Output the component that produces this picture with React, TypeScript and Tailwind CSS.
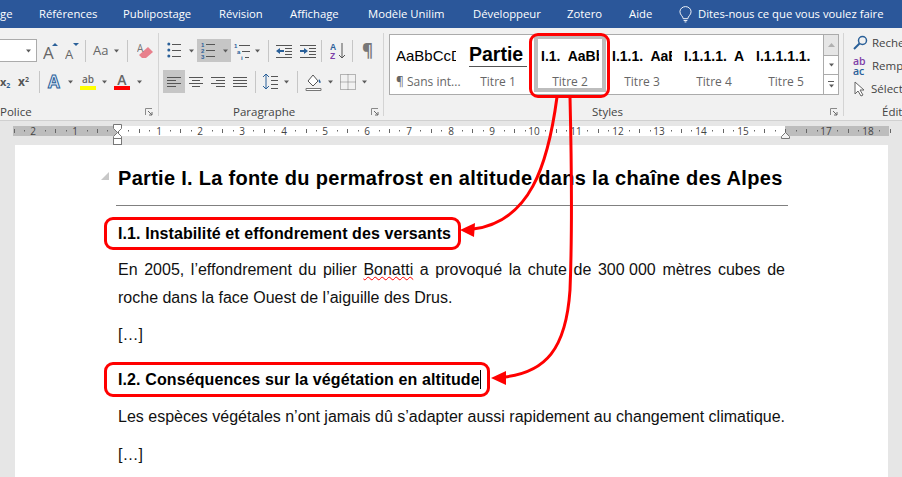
import React from "react";

const tabs: [string, string][] = [
  ["ge", "w-[39px]"],
  ["Références", "w-[84px]"],
  ["Publipostage", "w-[96px]"],
  ["Révision", "w-[71px]"],
  ["Affichage", "w-[78px]"],
  ["Modèle Unilim", "w-[105px]"],
  ["Développeur", "w-[94px]"],
  ["Zotero", "w-[62px]"],
  ["Aide", "w-[51px]"],
];

const Caret = ({ className = "" }: { className?: string }) => (
  <svg width="7" height="4" viewBox="0 0 7 4" className={`shrink-0 ${className}`}>
    <path d="M1 .5h5L3.500 3.500z" fill="#5c5c5c" />
  </svg>
);
const Sep = ({ className = "" }: { className?: string }) => <div className={`w-px h-[22px] shrink-0 bg-[#c6c6c6] ${className}`} />;

const Launcher = () => (
  <svg width="8" height="8" viewBox="0 0 8 8">
    <path d="M.5 7V.5H7" fill="none" stroke="#8a8a8a" />
    <path d="M3 3l4 4M4 7h3V4" fill="none" stroke="#6a6a6a" />
  </svg>
);

const Align = ({ w, rows, className = "" }: { w: number; rows: [number, number][]; className?: string }) => (
  <svg width={w} height="12" viewBox={`0 0 ${w} 12`} className={`shrink-0 ${className}`}>
    {rows.map(([a, b], i) => (
      <path key={i} d={`M${a} ${i * 3 + 1.5}H${b}`} stroke="#555" />
    ))}
  </svg>
);

const ListIcon = ({ kind }: { kind: "bullet" | "num" }) => (
  <svg width="14" height="17" viewBox="0 0 14 17" className="shrink-0">
    {[2, 8, 14].map((y, i) =>
      kind === "bullet" ? (
        <circle key={y} cx="1.800" cy={y} r="1.500" fill="#2a6099" />
      ) : (
        <text key={y} x="0" y={y + 2.5} fontSize="6" fontWeight="700" fill="#2a6099" fontFamily="Liberation Sans, sans-serif">
          {i + 1}
        </text>
      )
    )}
    <path d="M5 2.500h9M5 8.500h9M5 14.500h9" stroke="#555" />
  </svg>
);

const StyleItem = ({ preview, label, selected, previewClass = "", w = "w-[72px]", extra }: { preview?: string; label: string; selected?: boolean; previewClass?: string; w?: string; extra?: React.ReactNode }) => (
  <div className={`${w} shrink-0 self-start flex flex-col border-[4px] ${selected ? "h-[57px] pl-[3px] border-[#bdbdbd]" : "h-[59px] border-transparent"}`}>
    <div className={`h-[34px] shrink-0 flex items-center whitespace-pre overflow-hidden font-['Liberation_Sans',sans-serif] text-black ${previewClass}`}>
      {extra ?? preview}
    </div>
    <div className={`text-[12px] leading-[17px] text-[#666] whitespace-nowrap ${selected ? "text-center w-[58px]" : "text-center w-[60px]"}`}>{label}</div>
  </div>
);

function Ruler() {
  const labels = [
    [33, "2"], [75, "1"], [159, "1"], [200, "2"], [242, "3"], [284, "4"], [325, "5"], [367, "6"], [409, "7"], [451, "8"], [492, "9"], [534, "10"], [576, "11"], [618, "12"], [659, "13"], [701, "14"], [743, "15"], [826, "17"], [868, "18"],
  ] as [number, string][];
  const ticks: number[] = [];
  for (let x = 13.5; x < 890; x += 10.43) ticks.push(x);
  return (
    <svg width="902" height="24" viewBox="0 0 902 24" className="block">
      <rect x="13" y="5" width="105" height="10" fill="#bdbdbd" />
      <rect x="118" y="5" width="667" height="10" fill="#fff" />
      <rect x="785" y="5" width="104" height="10" fill="#bdbdbd" />
      {ticks.map((x, i) => {
        const near = labels.some(([l]) => Math.abs(l - x) < 4);
        if (near) return null;
        const major = i % 2 === 0;
        return <rect key={i} x={Math.round(x)} y={major ? 8 : 9} width="1" height={major ? 4 : 1.5} fill="#666" />;
      })}
      {labels.map(([x, t]) => (
        <text key={t + x} x={x} y="14" textAnchor="middle" fontSize="10" fill="#444" fontFamily="Open Sans, sans-serif">
          {t}
        </text>
      ))}
      <path d="M113.500 3.500h8v4l-4 4-4-4z" fill="#fff" stroke="#777" />
      <path d="M113.500 15.500l4-4 4 4v2h-8z" fill="#fff" stroke="#777" />
      <rect x="113.500" y="17.500" width="8" height="6" fill="#fff" stroke="#777" />
      <path d="M781.500 15.500l4-4 4 4v2h-8z" fill="#f4f4f4" stroke="#777" />
    </svg>
  );
}

const groupCls = "shrink-0 border-r border-[#d4d4d4] mt-[5px] mb-[4px] flex flex-col";
const labelCls = "mt-auto h-[8px] flex items-center text-[11.500px] whitespace-nowrap";

export default function App() {
  return (
    <div className="relative w-[902px] h-[477px] overflow-hidden bg-[#e6e6e6] font-['Open_Sans',sans-serif]">
      {/* title tabs */}
      <div className="h-[28px] bg-[#2b579a] flex items-center text-white text-[11.300px] whitespace-nowrap">
        {tabs.map(([t, w], i) => (
          <div key={i} className={`${w} shrink-0`}>{t}</div>
        ))}
        <div className="flex items-center gap-[6px] -ml-[1px]">
          <svg width="13" height="17" viewBox="0 0 14 17" fill="none" stroke="#fff">
            <path d="M4.500 13c0-2.500-3.500-4-3.500-7.500a6 5.500 0 0 1 12 0C13 9 9.500 10.500 9.500 13zM5 15h4M6 16.500h2" />
          </svg>
          <span>Dites-nous ce que vous voulez faire</span>
        </div>
      </div>

      {/* ribbon */}
      <div className="h-[93px] bg-[#f1f1f1] border-b border-[#d0d0d0] flex text-[#444] overflow-hidden">
        {/* Police */}
        <div className={`w-[159px] ${groupCls}`}>
          <div className="h-[23px] mt-[6px] flex items-center text-[#555]">
            <div className="w-[37px] h-[23px] shrink-0 bg-white border border-[#ababab] border-l-0 flex items-center justify-end pr-[4px]"><Caret /></div>
            <svg width="16" height="18" viewBox="0 0 16 18" className="ml-[6px] shrink-0">
              <text x="0" y="17" fontSize="17" fill="#666" fontFamily="Open Sans, sans-serif">A</text>
              <path d="M9 4l3-3 3 3z" fill="#2a6099" />
            </svg>
            <svg width="14" height="18" viewBox="0 0 14 18" className="ml-[6px] shrink-0">
              <text x="0" y="17" fontSize="13" fill="#666" fontFamily="Open Sans, sans-serif">A</text>
              <path d="M8 1h6l-3 3z" fill="#2a6099" />
            </svg>
            <Sep className="ml-[6px]" />
            <span className="ml-[7px] w-[16px] text-[13px] leading-none text-[#666]">Aa</span>
            <Caret className="ml-[4px]" />
            <Sep className="ml-[7px]" />
            <svg width="16" height="18" viewBox="0 0 16 18" className="ml-[9px] shrink-0">
              <path d="M5 16l-3-3 9-8 5 5-7 6z" fill="#e8808c" />
              <text x="0" y="10" fontSize="10" fill="#777" fontFamily="Open Sans, sans-serif">A</text>
            </svg>
          </div>
          <div className="h-[23px] mt-[8px] flex items-center text-[#555]">
            <span className="w-[18px] shrink-0 text-[11px] font-bold leading-none">x<sub className="text-[7px] text-[#2a6099]">2</sub></span>
            <span className="w-[21px] shrink-0 text-[12px] font-bold leading-none">x<sup className="text-[7px]">2</sup></span>
            <Sep />
            <span className="ml-[8px] w-[15px] shrink-0 text-[17px] font-bold leading-none text-[#dce8f5] [-webkit-text-stroke:1px_#2a6099]">A</span>
            <Caret className="ml-[4px]" />
            <div className="ml-[6px] w-[16px] shrink-0 flex flex-col items-center">
              <span className="text-[10px] leading-[13px] font-semibold text-[#666]">ab</span>
              <div className="w-[16px] h-[4px] bg-[#ffff00]" />
            </div>
            <Caret className="ml-[5px]" />
            <div className="ml-[6px] w-[16px] shrink-0 flex flex-col items-center">
              <span className="text-[14px] leading-[13px] font-semibold text-[#666]">A</span>
              <div className="w-[16px] h-[4px] bg-[#ff0000]" />
            </div>
            <Caret className="ml-[6px]" />
          </div>
          <div className={`${labelCls} justify-between pr-[5px]`}>
            <span>Police</span><Launcher />
          </div>
        </div>

        {/* Paragraphe */}
        <div className={`w-[225px] ${groupCls}`}>
          <div className="h-[23px] mt-[6px] flex items-center">
            <div className="ml-[8px] flex"><ListIcon kind="bullet" /></div>
            <Caret className="ml-[7px]" />
            <div className="ml-[2px] w-[34px] h-[23px] shrink-0 bg-[#c6c6c6] flex items-center pl-[4px] gap-[7px]"><ListIcon kind="num" /><Caret /></div>
            <svg width="16" height="18" viewBox="0 0 16 18" className="ml-[3px] shrink-0">
              <text x="0" y="6" fontSize="6" fontWeight="700" fill="#2a6099" fontFamily="Liberation Sans, sans-serif">1</text>
              <text x="3" y="12" fontSize="6" fontWeight="700" fill="#2a6099" fontFamily="Liberation Sans, sans-serif">a</text>
              <text x="7" y="18" fontSize="6" fontWeight="700" fill="#2a6099" fontFamily="Liberation Sans, sans-serif">i</text>
              <path d="M5 3.500h11M8 9.500h8M11 15.500h4" stroke="#555" />
            </svg>
            <Caret className="ml-[4px]" />
            <Sep className="ml-[7px]" />
            <svg width="16" height="14" viewBox="0 0 16 14" className="ml-[7px] shrink-0">
              <path d="M0 1.500h16M9 4.500h7M9 7.500h7M9 10.500h7M0 13.500h16" stroke="#555" />
              <path d="M0 7l4-3v2h4v2H4v2z" fill="#2a6099" />
            </svg>
            <svg width="16" height="14" viewBox="0 0 16 14" className="ml-[8px] shrink-0">
              <path d="M0 1.500h16M9 4.500h7M9 7.500h7M9 10.500h7M0 13.500h16" stroke="#555" />
              <path d="M8 7L4 4v2H0v2h4v2z" fill="#2a6099" />
            </svg>
            <Sep className="ml-[5px]" />
            <svg width="16" height="18" viewBox="0 0 16 18" className="ml-[8px] shrink-0">
              <text x="0" y="8" fontSize="8.500" fontWeight="700" fill="#2a6099" fontFamily="Liberation Sans, sans-serif">A</text>
              <text x="0" y="17" fontSize="8.500" fontWeight="700" fill="#7e3fa8" fontFamily="Liberation Sans, sans-serif">Z</text>
              <path d="M12 1v15M9 13l3 3 3-3" fill="none" stroke="#555" />
            </svg>
            <Sep className="ml-[6px]" />
            <span className="ml-[9px] text-[17px] font-bold text-[#777] leading-none">¶</span>
          </div>
          <div className="h-[23px] mt-[8px] flex items-center">
            <div className="ml-[4px] w-[22px] h-[23px] shrink-0 bg-[#c6c6c6] flex items-center justify-center">
              <Align w={14} rows={[[0, 14], [0, 9], [0, 14], [0, 9]]} />
            </div>
            <Align className="ml-[4px]" w={14} rows={[[0, 14], [3, 11], [0, 14], [3, 11]]} />
            <Align className="ml-[8px]" w={14} rows={[[0, 14], [5, 14], [0, 14], [5, 14]]} />
            <Align className="ml-[8px]" w={14} rows={[[0, 14], [0, 14], [0, 14], [0, 14]]} />
            <Sep className="ml-[8px]" />
            <svg width="15" height="18" viewBox="0 0 15 18" className="ml-[7px] shrink-0">
              <path d="M3 1v15M0 4l3-3 3 3M0 13l3 3 3-3" fill="none" stroke="#2a6099" />
              <path d="M8 3.500h7M8 7.500h7M8 11.500h7M8 15.500h7" stroke="#555" />
            </svg>
            <Caret className="ml-[5px]" />
            <Sep className="ml-[7px]" />
            <svg width="17" height="18" viewBox="0 0 17 18" className="ml-[7px] shrink-0">
              <path d="M3 8l5-6 5 6-5 5z" fill="#fff" stroke="#555" />
              <path d="M14 6c2 2 2 4 1 4s-2-2-1-4z" fill="#2a6099" />
              <path d="M1 15.500h15v2H1z" fill="#fff" stroke="#777" />
            </svg>
            <Caret className="ml-[5px]" />
            <svg width="16" height="16" viewBox="0 0 16 16" className="ml-[6px] shrink-0">
              <path d="M.5.500h15v15H.5zM8 .5v15M.5 8h15" fill="none" stroke="#777" strokeDasharray="1 1" />
            </svg>
            <Caret className="ml-[5px]" />
          </div>
          <div className={`${labelCls} pr-[4px]`}>
            <span className="ml-[74px]">Paragraphe</span>
            <span className="ml-auto"><Launcher /></span>
          </div>
        </div>

        {/* Styles */}
        <div className={`w-[460px] ${groupCls} pl-[5px]`}>
          <div className="flex h-[61px] mt-[1px]">
            <div className="w-[435px] h-[61px] bg-white border border-[#ababab] flex pl-[2px]">
              <StyleItem preview="AaBbCcDd" label="¶ Sans int..." previewClass="text-[15px] w-[60px]" />
              <StyleItem label="Titre 1" w="w-[70px]" previewClass="w-[60px]" extra={
                <div className="h-[28px] w-[58px] mt-[-6px] pt-[3px] ml-[1px] border-b border-[#555] text-[19.500px] leading-[24px] font-bold">Partie</div>
              } />
              <StyleItem selected preview="I.1.  AaBbCc" label="Titre 2" previewClass="text-[14px] font-bold w-[58px]" />
              <div className="w-[2px] shrink-0" />
              <StyleItem preview="I.1.1.  AaBb" label="Titre 3" previewClass="text-[14px] font-bold w-[60px]" />
              <StyleItem preview="I.1.1.1.  AaBb" label="Titre 4" previewClass="text-[14px] font-bold w-[60px]" />
              <StyleItem preview="I.1.1.1.1." label="Titre 5" previewClass="text-[14px] font-bold w-[60px]" />
            </div>
            <div className="w-[15px] h-[61px] border border-l-0 border-[#ababab] flex flex-col bg-white">
              <div className="h-[21px] bg-[#e6e6e6] border-b border-[#ababab] flex items-center justify-center"><svg width="7" height="4" viewBox="0 0 7 4"><path d="M0 4h7L3.500 0z" fill="#b0b0b0" /></svg></div>
              <div className="h-[19px] border-b border-[#ababab] flex items-center justify-center"><Caret /></div>
              <div className="flex-1 flex flex-col items-center justify-center gap-[2px]"><div className="w-[6px] h-px bg-[#5c5c5c]" /><Caret /></div>
            </div>
          </div>
          <div className={`${labelCls} pr-[5px]`}>
            <span className="ml-[203px]">Styles</span>
            <span className="ml-auto"><Launcher /></span>
          </div>
        </div>

        {/* Edition */}
        <div className="flex-1 mt-[5px] mb-[4px] flex flex-col pl-[9px] text-[11.500px] whitespace-nowrap">
          <div className="h-[23px] -mt-[2px] flex items-center gap-[4px]">
            <svg width="15" height="15" viewBox="0 0 15 15" fill="none" className="shrink-0"><circle cx="9.500" cy="5.500" r="4" stroke="#2a6099" strokeWidth="1.500" /><path d="M6.500 8.500L1 14" stroke="#2a6099" strokeWidth="2" /></svg>
            <span>Reche</span>
          </div>
          <div className="h-[23px] flex items-center gap-[2px]">
            <span className="w-[17px] shrink-0 flex flex-col text-[10.500px] leading-[10px] font-semibold text-[#7e3fa8]"><span>ab</span><span className="text-[#2a6099]">ac</span></span>
            <span>Remp</span>
          </div>
          <div className="h-[23px] flex items-center gap-[4px]">
            <svg width="14" height="16" viewBox="0 0 14 16" className="shrink-0"><path d="M2 1v12l3-3 3 5 2-1-3-5h4z" fill="#fff" stroke="#666" /></svg>
            <span>Sélect</span>
          </div>
          <div className="mt-auto h-[8px] flex items-center pl-[29px]">Édit</div>
        </div>
      </div>

      <Ruler />

      {/* page */}
      <div className="ml-[15px] w-[873px] h-[334px] bg-white pl-[89px] pr-[100px] pt-[20px] relative font-['Liberation_Sans',sans-serif] text-black">
        <div className="relative h-[25px] ml-[14px] flex items-center text-[20px] font-bold whitespace-nowrap tracking-[0.3px]">
          <svg width="8" height="8" viewBox="0 0 8 8" className="absolute left-[-17px] top-[7px]"><path d="M8 0v8H0z" fill="#c8c8c8" /></svg>
          Partie I. La fonte du permafrost en altitude dans la chaîne des Alpes
        </div>
        <div className="h-px bg-[#808080] ml-[12px] mt-[15px] w-[672px]" />
        <div className="mt-[11px] inline-flex items-center h-[33px] w-[357px] pl-[11px] border-[3px] border-[#ff0000] rounded-[9px] bg-white text-[16px] font-bold whitespace-nowrap tracking-[0.09px]">
          I.1. Instabilité et effondrement des versants
        </div>
        <div className="ml-[14px] w-[667px] mt-[6px] text-[16px] leading-[28px] text-[#111]">
          <p className="text-justify">
            En 2005, l’effondrement du pilier <span className="underline decoration-wavy decoration-[#ff0000] decoration-1">Bonatti</span> a provoqué la chute de <span className="inline-block whitespace-nowrap">300 000</span> mètres cubes de roche dans la face Ouest de l’aiguille des Drus.
          </p>
          <p className="mt-[9px]">[…]</p>
        </div>
        <div className="mt-[13px] inline-flex items-center h-[35px] w-[386px] pl-[11px] border-[3px] border-[#ff0000] rounded-[9px] bg-white text-[16px] font-bold whitespace-nowrap tracking-[0.11px]">
          I.2. Conséquences sur la végétation en altitude<span className="inline-block w-px h-[19px] bg-black" />
        </div>
        <div className="ml-[14px] w-[680px] mt-[6px] text-[16px] leading-[28px] text-[#111] whitespace-nowrap">
          <p>Les espèces végétales n’ont jamais dû s’adapter aussi rapidement au changement climatique.</p>
          <p className="mt-[10px]">[…]</p>
        </div>
      </div>

      {/* Titre 2 highlight and arrows */}
      <div className="absolute left-[529px] top-[33px] w-[81px] h-[65px] border-[3px] border-[#ff0000] rounded-[9px]" />
      <svg width="902" height="477" viewBox="0 0 902 477" className="absolute left-0 top-0 pointer-events-none">
        <path d="M557 97C548 165 530 222 473 229" fill="none" stroke="#ff0000" strokeWidth="3" />
        <path d="M460 230l15-7-1 14z" fill="#ff0000" />
        <path d="M570 97C572 180 572 240 570 290C566 350 545 372 505 377" fill="none" stroke="#ff0000" strokeWidth="3" />
        <path d="M491 378l15-7 0 14z" fill="#ff0000" />
      </svg>
    </div>
  );
}
